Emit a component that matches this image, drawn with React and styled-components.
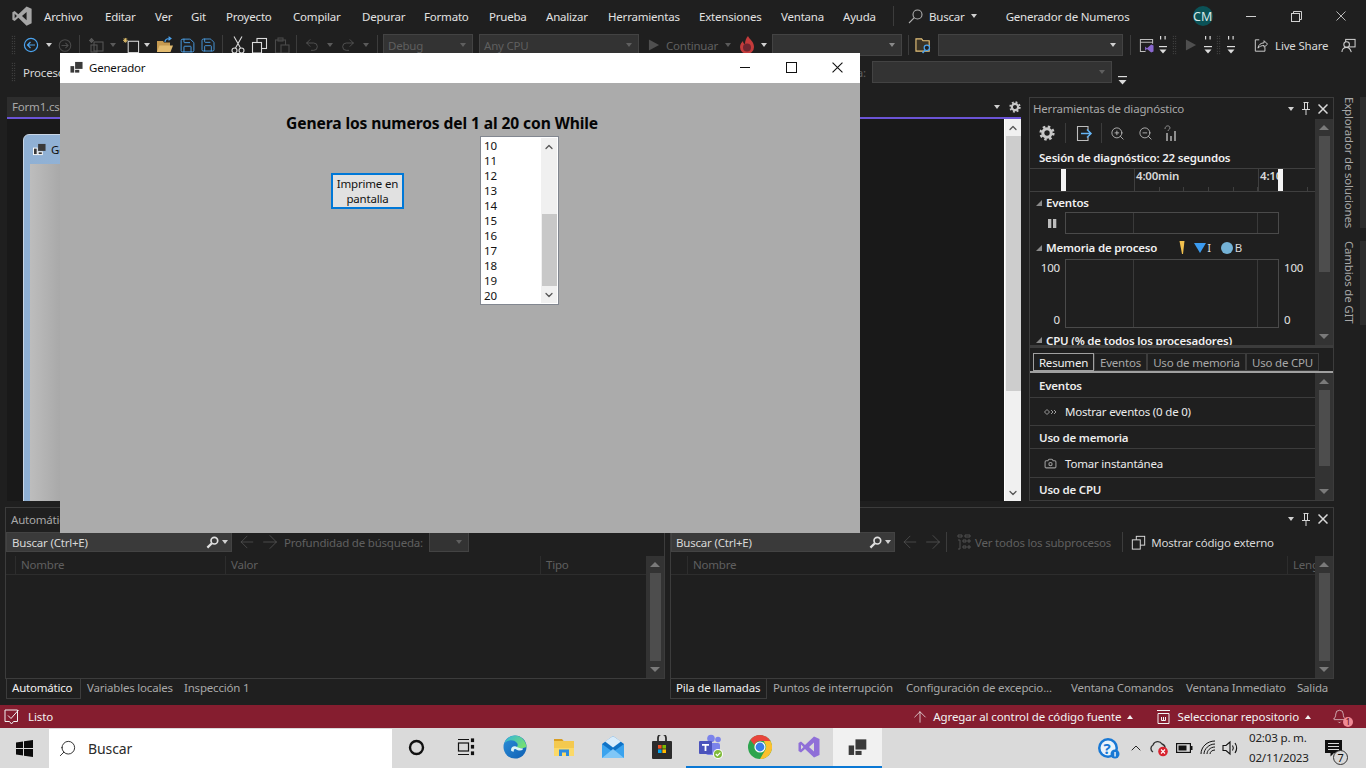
import React from "react";
import styled, { createGlobalStyle } from "styled-components";
import { Search, Save, Undo2, Redo2, ZoomIn, ZoomOut, ArrowLeft, ArrowRight, ArrowUp, Bell, Camera, ChevronUp, ChevronDown } from "lucide-react";

const GlobalStyle = createGlobalStyle`
  html, body { margin: 0; padding: 0; background: #1f1f1f; overflow: hidden; }
  * { box-sizing: border-box; }
  body { font-family: "Noto Sans", "Open Sans", sans-serif; font-size: 11.5px; letter-spacing: -0.2px; }
`;

const Page = styled.div`
  position: relative;
  width: 1366px;
  height: 768px;
  overflow: hidden;
  display: flex;
  flex-direction: column;
  color: #e0e0e0;
  background: #1f1f1f;
`;

/* ---------- title / menu ---------- */
const MenuBar = styled.div`
  height: 32px;
  display: flex;
  align-items: center;
  padding-left: 11px;
  flex: none;
`;
const Logo = styled.div`
  width: 33px;
  flex: none;
  display: flex;
`;
const MenuItem = styled.span`
  width: ${(p) => p.$w}px;
  flex: none;
  color: #e2e2e2;
  white-space: nowrap;
`;
const BarSep = styled.div`
  width: 1px;
  height: 20px;
  flex: none;
  background: #3c3c3c;
  margin-right: 14px;
`;
const SearchLabel = styled.span`
  color: #e2e2e2;
  margin-left: 6px;
  margin-right: 6px;
`;
const ProjectName = styled.span`
  margin-left: 29px;
  width: 187px;
  flex: none;
  color: #e2e2e2;
  white-space: nowrap;
`;
const Avatar = styled.div`
  width: 20px;
  height: 20px;
  flex: none;
  border-radius: 50%;
  background: #0b5257;
  color: #d8e8e8;
  display: flex;
  align-items: center;
  justify-content: center;
  font-size: 12.5px;
  letter-spacing: 0;
  margin-right: 16px;
`;
const WinBtn = styled.div`
  width: 45px;
  flex: none;
  display: flex;
  justify-content: center;
`;

/* ---------- toolbars ---------- */
const ToolBar = styled.div`
  height: ${(p) => p.$h}px;
  display: flex;
  align-items: center;
  padding-left: 11px;
  padding-right: ${(p) => p.$pr || 0}px;
  flex: none;
`;
const Slot = styled.div`
  width: ${(p) => p.$w}px;
  height: 22px;
  flex: none;
  display: flex;
  align-items: center;
  justify-content: center;
  color: ${(p) => p.$color || "#5a5a5a"};
`;
const OverflowSlot = styled.div`
  width: 8px;
  height: 22px;
  flex: none;
  padding-top: 12px;
`;
const Grip = styled.div`
  width: 5px;
  height: 20px;
  flex: none;
  background-image: radial-gradient(#5c5c5c 0.6px, transparent 0.8px);
  background-size: 2.5px 2.5px;
`;
const ToolSep = styled.div`
  width: 1px;
  height: 20px;
  background: #3c3c3c;
  flex: none;
  margin-left: ${(p) => p.$m ?? 7}px;
  margin-right: ${(p) => p.$mr ?? p.$m ?? 7}px;
`;
const Caret = styled.span`
  display: inline-block;
  width: 0;
  height: 0;
  flex: none;
  border-left: 3.5px solid transparent;
  border-right: 3.5px solid transparent;
  border-${(p) => (p.$up ? "bottom" : "top")}: 4px solid ${(p) => p.$color || "#d0d0d0"};
`;
const ScrollCaret = styled.span`
  width: 0;
  height: 0;
  border-left: 5px solid transparent;
  border-right: 5px solid transparent;
  border-${(p) => (p.$up ? "bottom" : "top")}: 5px solid #7a7a7a;
`;
const Combo = styled.div`
  width: ${(p) => p.$w}px;
  height: ${(p) => p.$h || 22}px;
  flex: none;
  background: #333333;
  border: 1px solid #434343;
  display: flex;
  align-items: center;
  justify-content: space-between;
  padding: 0 6px 0 4px;
  color: #5f5f5f;
  margin-right: ${(p) => p.$mr || 0}px;
`;
const DimText = styled.span`
  color: #5f5f5f;
  white-space: nowrap;
`;
const ToolText = styled.span`
  color: ${(p) => p.$color || "#d8d8d8"};
  white-space: nowrap;
  margin-left: ${(p) => p.$ml || 0}px;
`;
const Gap = styled.div`
  width: ${(p) => p.$w}px;
  flex: none;
`;
const Spring = styled.div`
  flex: 1;
`;

/* ---------- work area ---------- */
const WorkArea = styled.div`
  flex: 1;
  display: flex;
  padding-top: 11px;
  min-height: 0;
`;
const Docks = styled.div`
  width: 1335px;
  display: flex;
  flex-direction: column;
  gap: 6px;
`;
const TopRow = styled.div`
  height: 404px;
  display: flex;
  padding-left: 7px;
  gap: 8px;
`;
const BottomRow = styled.div`
  height: 198px;
  display: flex;
  padding-left: 5px;
  gap: 5px;
`;
const SideTabs = styled.div`
  width: 31px;
  display: flex;
  flex-direction: column;
  gap: 13px;
  align-items: flex-end;
`;
const SideTab = styled.div`
  writing-mode: vertical-rl;
  width: 26px;
  height: ${(p) => p.$h}px;
  border-right: 6px solid #2d2d2d;
  color: #a8a8a8;
  padding-right: 3px;
  white-space: nowrap;
`;

/* ---------- document well ---------- */
const DocWell = styled.div`
  width: 1014px;
  display: flex;
  flex-direction: column;
`;
const DocTabs = styled.div`
  height: 22px;
  flex: none;
  display: flex;
  align-items: flex-start;
  justify-content: space-between;
  border-bottom: 2px solid #6b54d6;
`;
const DocTab = styled.div`
  height: 20px;
  width: 120px;
  padding: 2px 0 0 5px;
  background: #2d2d2d;
  color: #a8a8a8;
`;
const DocTools = styled.div`
  display: flex;
  align-items: center;
  gap: 9px;
  height: 20px;
  color: #c8c8c8;
`;
const DocBody = styled.div`
  flex: 1;
  display: flex;
  min-height: 0;
`;
const Canvas = styled.div`
  flex: 1;
  background: #191919;
  padding: 15px 0 0 16px;
  overflow: hidden;
`;
const Preview = styled.div`
  width: 700px;
  height: 400px;
  border-radius: 6px 6px 0 0;
  border: 1px solid #c9d6e6;
  background: linear-gradient(90deg, #8fb0d4, #b6d0ec);
  padding: 0 0 0 6px;
`;
const PreviewTitle = styled.div`
  height: 29px;
  display: flex;
  align-items: center;
  gap: 5px;
  padding-left: 3px;
  color: #101010;
`;
const PreviewBody = styled.div`
  height: 400px;
  background: linear-gradient(90deg, #bdbdbd, #a9a9a9 30px);
`;

/* ---------- scroll bars ---------- */
const Scroll = styled.div`
  width: ${(p) => p.$w || 18}px;
  flex: none;
  display: flex;
  flex-direction: column;
  align-items: center;
  background: ${(p) => (p.$light ? "#f0f0f0" : "#333333")};
  border-left: ${(p) => (p.$light ? "1px solid #ffffff" : "none")};
`;
const ScrollEnd = styled.div`
  height: 17px;
  flex: none;
  display: flex;
  align-items: center;
  justify-content: center;
`;
const Thumb = styled.div`
  width: ${(p) => p.$w || 11}px;
  height: ${(p) => p.$h}px;
  margin-top: ${(p) => p.$top || 0}px;
  background: ${(p) => p.$color || "#4d4d4d"};
  flex: none;
`;

/* ---------- diagnostics ---------- */
const DiagPanel = styled.div`
  width: 305px;
  border: 1px solid #3c3c3c;
  display: flex;
  flex-direction: column;
  overflow: hidden;
`;
const PanelTitle = styled.div`
  height: ${(p) => p.$h || 21}px;
  flex: none;
  display: flex;
  align-items: center;
  justify-content: space-between;
  padding: 0 5px ${(p) => p.$pb || 0}px ${(p) => p.$pl || 3}px;
  color: #a8a8a8;
  white-space: nowrap;
`;
const TitleTools = styled.div`
  display: flex;
  align-items: center;
  gap: 8px;
`;
const DiagUpper = styled.div`
  height: 226px;
  flex: none;
  display: flex;
`;
const DiagContent = styled.div`
  flex: 1;
  min-width: 0;
  overflow: hidden;
`;
const DiagTools = styled.div`
  height: 28px;
  display: flex;
  align-items: center;
  padding-left: 9px;
  color: #c8c8c8;
`;
const Session = styled.div`
  height: 21px;
  padding-left: 9px;
  display: flex;
  align-items: center;
  font-weight: 600;
  color: #f0f0f0;
  white-space: nowrap;
`;
const Ruler = styled.div`
  position: relative;
  height: 24px;
  display: grid;
  grid-template-columns: 104px 124px 1fr;
  border-top: 1px solid #3f3f3f;
  border-bottom: 1px solid #3f3f3f;
  background-image: repeating-linear-gradient(90deg, #3f3f3f 0 1px, transparent 1px 24.7px);
  background-size: 100% 4px;
  background-position: 104px bottom;
  background-repeat: no-repeat;
`;
const RulerCell = styled.div`
  border-left: ${(p) => (p.$line ? "1px solid #3f3f3f" : "none")};
  padding: 0 0 0 1px;
  font-weight: 600;
  color: #d8d8d8;
  line-height: 13px;
  white-space: nowrap;
  overflow: hidden;
`;
const RulerHandle = styled.div`
  position: absolute;
  top: 0;
  bottom: 0;
  left: ${(p) => p.$left}px;
  width: 5px;
  background: #f4f4f4;
`;
const SectionHead = styled.div`
  height: ${(p) => p.$h}px;
  display: flex;
  align-items: center;
  padding: ${(p) => p.$pt || 0}px 0 0 6px;
  font-weight: 600;
  color: #f0f0f0;
  white-space: nowrap;
`;
const Tri = styled.span`
  width: 0;
  height: 0;
  flex: none;
  margin-right: 4px;
  border-bottom: 6px solid #8a8a8a;
  border-left: 6px solid transparent;
`;
const Legend = styled.div`
  display: flex;
  align-items: center;
  margin-left: 22px;
  font-weight: 400;
  color: #d8d8d8;
`;
const Marker = styled.span`
  width: 0;
  height: 0;
  border-left: 6.5px solid transparent;
  border-right: 6.5px solid transparent;
  border-top: 10px solid #3b9bf0;
`;
const Dot = styled.span`
  width: 12px;
  height: 12px;
  border-radius: 50%;
  background: #74b2d6;
`;
const GraphRow = styled.div`
  display: flex;
  height: ${(p) => p.$h}px;
`;
const AxisCol = styled.div`
  width: ${(p) => p.$w}px;
  flex: none;
  display: flex;
  flex-direction: column;
  justify-content: ${(p) => (p.$center ? "center" : "space-between")};
  align-items: ${(p) => (p.$center ? "center" : p.$left ? "flex-start" : "flex-end")};
  padding: ${(p) => (p.$center ? "0 0 0 9px" : p.$left ? "0 0 0 5px" : "0 5px 0 0")};
  color: #e4e4e4;
  line-height: 17px;
`;
const GraphBox = styled.div`
  width: 214px;
  flex: none;
  display: grid;
  grid-template-columns: 68px 124px 1fr;
  border: 1px solid #4a4a4a;
`;
const GraphCell = styled.div`
  border-right: ${(p) => (p.$last ? "none" : "1px solid #3a3a3a")};
`;
const Bar = styled.div`
  height: 3px;
  flex: none;
  background: #3c3c3c;
`;
const StatTabs = styled.div`
  height: 25px;
  flex: none;
  display: flex;
  padding: 5px 0 0 3px;
  border-bottom: 2px solid #a0a0a0;
`;
const StatTab = styled.div`
  width: ${(p) => p.$w}px;
  height: 18px;
  line-height: 17px;
  text-align: center;
  color: ${(p) => (p.$active ? "#f0f0f0" : "#a8a8a8")};
  border: 1px solid ${(p) => (p.$active ? "#a0a0a0" : "#3c3c3c")};
  white-space: nowrap;
`;
const DiagLower = styled.div`
  flex: 1;
  display: flex;
  min-height: 0;
`;
const SummaryList = styled.div`
  flex: 1;
  min-width: 0;
  overflow: hidden;
`;
const SummaryRow = styled.div`
  height: ${(p) => p.$h}px;
  display: flex;
  align-items: center;
  padding: ${(p) => p.$pt ?? 1}px 0 0 ${(p) => (p.$item ? 14 : 9)}px;
  border-bottom: ${(p) => (p.$last ? "none" : "1px solid #3c3c3c")};
  font-weight: ${(p) => (p.$item ? 400 : 600)};
  color: #ececec;
  white-space: nowrap;
`;
const RowIcon = styled.span`
  width: 21px;
  display: flex;
  flex: none;
  color: #9a9a9a;
`;

/* ---------- bottom tool windows ---------- */
const ToolPane = styled.div`
  width: ${(p) => p.$w}px;
  display: flex;
  flex-direction: column;
`;
const PaneBox = styled.div`
  height: 172px;
  border: 1px solid #3c3c3c;
  display: flex;
  flex-direction: column;
`;
const PaneTools = styled.div`
  height: 20px;
  display: flex;
  align-items: center;
  flex: none;
`;
const SearchBox = styled.div`
  width: ${(p) => p.$w}px;
  height: 20px;
  flex: none;
  background: #3a3a3a;
  border: 1px solid #434343;
  display: flex;
  align-items: center;
  justify-content: space-between;
  padding: 0 3px 0 ${(p) => p.$pl || 5}px;
  color: #d8d8d8;
  margin-right: 5px;
`;
const SearchIcons = styled.div`
  display: flex;
  align-items: center;
  gap: 3px;
`;
const Pane = styled.div`
  flex: 1;
  display: flex;
  min-height: 0;
  padding-top: 4px;
`;
const GridArea = styled.div`
  flex: 1;
  min-width: 0;
`;
const GridHead = styled.div`
  height: 19px;
  display: grid;
  grid-template-columns: ${(p) => p.$cols};
  border-bottom: 1px solid #2d2d2d;
`;
const GridCol = styled.div`
  border-left: ${(p) => (p.$first ? "none" : "1px solid #2d2d2d")};
  padding-left: 5px;
  color: #5f5f5f;
  line-height: 18px;
  white-space: nowrap;
  overflow: hidden;
`;
const PaneTabs = styled.div`
  display: flex;
  height: 20px;
`;
const PaneTab = styled.div`
  height: 20px;
  line-height: 18px;
  padding-left: ${(p) => (p.$active ? 5 : 0)}px;
  margin-left: ${(p) => p.$ml || 0}px;
  border: ${(p) => (p.$active ? "1px solid #3c3c3c" : "none")};
  border-top: none;
  color: ${(p) => (p.$active ? "#f0f0f0" : "#a8a8a8")};
  white-space: nowrap;
  width: ${(p) => (p.$w ? `${p.$w}px` : "auto")};
`;

/* ---------- status bar and taskbar ---------- */
const StatusBar = styled.div`
  height: 23px;
  flex: none;
  background: #851d2f;
  display: flex;
  align-items: center;
  padding-left: 4px;
  color: #f2f2f2;
  letter-spacing: -0.1px;
`;
const StatusItem = styled.div`
  display: flex;
  align-items: center;
  margin-right: ${(p) => p.$mr || 0}px;
  white-space: nowrap;
`;
const BellWrap = styled.div`
  position: relative;
  width: 18px;
  margin-right: 16px;
  display: flex;
`;
const BellBadge = styled.span`
  position: absolute;
  right: -3px;
  bottom: -3px;
  width: 10px;
  height: 10px;
  border-radius: 50%;
  background: #f08a96;
  color: #5a0d18;
  font-size: 9px;
  line-height: 10px;
  text-align: center;
  letter-spacing: 0;
`;
const TaskBar = styled.div`
  height: 40px;
  flex: none;
  background: #dadada;
  display: flex;
  align-items: center;
`;
const StartBtn = styled.div`
  width: 49px;
  display: flex;
  justify-content: center;
`;
const TaskSearch = styled.div`
  width: 343px;
  height: 39px;
  margin-top: 1px;
  background: #ffffff;
  display: flex;
  align-items: center;
  padding-left: 9px;
  gap: 11px;
  color: #2b2b2b;
  font-size: 14px;
  letter-spacing: -0.1px;
`;
const MirrorIcon = styled.span`
  display: flex;
  transform: scaleX(-1);
`;
const TaskBtn = styled.div`
  width: ${(p) => p.$w || 49}px;
  height: 40px;
  flex: none;
  display: flex;
  align-items: center;
  justify-content: center;
  background: ${(p) => (p.$active ? "#f1f1f1" : "transparent")};
  border-bottom: ${(p) => (p.$open ? "2px solid #0a78d4" : "2px solid transparent")};
`;
const Tray = styled.div`
  margin-left: auto;
  padding-right: 12px;
  display: flex;
  align-items: center;
  color: #1a1a1a;
`;
const TraySlot = styled.div`
  width: ${(p) => p.$w}px;
  display: flex;
  justify-content: center;
`;
const Clock = styled.div`
  width: 72px;
  display: flex;
  flex-direction: column;
  gap: 4px;
  padding-left: 9px;
  color: #222222;
  font-size: 11.6px;
  line-height: 16px;
  white-space: nowrap;
`;
const NotifyBtn = styled.div`
  position: relative;
  width: 42px;
  display: flex;
  justify-content: center;
`;
const NotifyBadge = styled.span`
  position: absolute;
  left: 21px;
  top: 10px;
  width: 15px;
  height: 15px;
  border-radius: 50%;
  border: 1px solid #333;
  background: #d8d8d8;
  color: #111;
  font-size: 11px;
  line-height: 13px;
  text-align: center;
`;

/* ---------- floating form ---------- */
const FormWindow = styled.div`
  position: absolute;
  left: 60px;
  top: 53px;
  width: 800px;
  height: 480px;
  display: flex;
  flex-direction: column;
  background: #ababab;
  color: #000000;
`;
const FormTitle = styled.div`
  height: 30px;
  flex: none;
  background: #ffffff;
  display: flex;
  align-items: center;
  padding: 0 0 2px 10px;
`;
const FormTitleText = styled.span`
  flex: 1;
  margin-left: 6px;
  color: #111111;
`;
const FormCtl = styled.div`
  width: 46px;
  flex: none;
  display: flex;
  justify-content: center;
`;
const Heading = styled.div`
  margin: 30px 0 3px 226px;
  height: 20px;
  line-height: 20px;
  font-size: 15.6px;
  font-weight: 700;
  letter-spacing: -0.1px;
  color: #050505;
  white-space: nowrap;
`;
const FormRow = styled.div`
  display: flex;
  align-items: flex-start;
  padding-left: 271px;
`;
const PrintButton = styled.div`
  width: 73px;
  height: 36px;
  margin: 37px 76px 0 0;
  background: #e1e1e1;
  border: 2px solid #0078d7;
  display: flex;
  align-items: center;
  justify-content: center;
  text-align: center;
  line-height: 15px;
  color: #111;
`;
const NumberList = styled.div`
  width: 79px;
  height: 169px;
  background: #ffffff;
  border: 1px solid #828790;
  display: flex;
  padding: 1px;
`;
const NumberItems = styled.div`
  flex: 1;
  padding: 0 0 0 2px;
  line-height: 15px;
  overflow: hidden;
  color: #111;
`;

/* ---------- drawn icons ---------- */
const VsMark = ({ size = 22, fill = "#a6a6a6" }) => (
  <svg width={size} height={size} viewBox="0 0 24 24">
    <path
      fillRule="evenodd"
      fill={fill}
      d="M17 1.5 22.5 4v16L17 22.5 8 14l-4 3.5L1.5 16V8L4 6.5 8 10ZM17 7.5 12 12l5 4.5ZM4 9.5v5L6.5 12Z"
    />
  </svg>
);
const AppGlyph = ({ size = 14, color = "#3a3a3a", stroke }) => (
  <svg width={size} height={size} viewBox="0 0 14 14">
    <rect x="5.5" y="1" width="8" height="7.5" fill={color} />
    <rect x="0.5" y="5.5" width="4" height="7" fill={color} stroke={stroke} />
    <rect x="5.5" y="9.5" width="4.5" height="3" fill={color} stroke={stroke} />
  </svg>
);
const SolidGear = ({ size = 12, color = "#c8c8c8" }) => (
  <svg width={size} height={size} viewBox="0 0 16 16" fill="none" stroke={color}>
    <circle cx="8" cy="8" r="4.2" strokeWidth="3" />
    <circle cx="8" cy="8" r="6.4" strokeWidth="2.4" strokeDasharray="2.5 2.53" />
  </svg>
);
const PinGlyph = ({ color = "#d8d8d8" }) => (
  <svg width="8" height="13" viewBox="0 0 8 13" fill="none" stroke={color}>
    <path d="M1.5 0.5h5M2.500 0.5v6.500M5.500 0.500v6.500M0 7.500h8M4 8v5" />
  </svg>
);
const CrossGlyph = ({ size = 10, color = "#d8d8d8", width = 1.5 }) => (
  <svg width={size} height={size} viewBox="0 0 10 10" fill="none" stroke={color} strokeWidth={width}>
    <path d="M0.500 0.500 9.500 9.500M9.500 0.500 0.500 9.500" />
  </svg>
);
const BackIcon = () => (
  <svg width="16" height="16" viewBox="0 0 16 16" fill="none" stroke="#4ba3ee" strokeWidth="1.2">
    <circle cx="8" cy="8" r="6.6" />
    <path d="M12 8H4.500M7.500 5l-3 3 3 3" />
  </svg>
);
const ForwardIcon = () => (
  <svg width="15" height="15" viewBox="0 0 16 16" fill="none" stroke="#4a4a4a" strokeWidth="1.2">
    <circle cx="8" cy="8" r="6.6" />
    <path d="M4 8h7.500M8.500 5l3 3-3 3" />
  </svg>
);
const NewProjectIcon = () => (
  <svg width="17" height="17" viewBox="0 0 17 17" fill="none" stroke="#555" strokeWidth="1.1">
    <path d="M2 2 5 5M5 2 2 5M3.500 1v5M1 3.500h5" />
    <rect x="6" y="5" width="9" height="9" />
    <rect x="3" y="8" width="6" height="7" />
  </svg>
);
const NewFileIcon = () => (
  <svg width="17" height="17" viewBox="0 0 18 18" fill="none">
    <path d="M2.500 1v5M0 3.500h5M1 1.500l3 4M4 1.500l-3 4" stroke="#e8c56f" strokeWidth="1" />
    <rect x="5.500" y="4.500" width="11" height="12" stroke="#dcdcdc" strokeWidth="1.1" />
  </svg>
);
const OpenIcon = () => (
  <svg width="18" height="18" viewBox="0 0 18 18">
    <path d="M1 5h6l1 1.500h6V16H1Z" fill="#c69a50" />
    <path d="M1 16l2.500-6.500H17L14.500 16Z" fill="#e2bb70" />
    <path d="M9 6c0-2.500 2-3.500 5-3.500M12.500 0.800l2.400 1.700-2.400 1.800" stroke="#4ba3ee" strokeWidth="1.2" fill="none" />
  </svg>
);
const CutIcon = () => (
  <svg width="14" height="18" viewBox="0 0 14 18" fill="none" stroke="#d8d8d8" strokeWidth="1.1">
    <circle cx="3.500" cy="14.500" r="2.500" />
    <circle cx="10.500" cy="14.500" r="2.500" />
    <path d="M4.500 12 11 0.500M9.500 12 3 0.500" />
  </svg>
);
const CopyIcon = ({ color = "#dcdcdc", size = 17 }) => (
  <svg width={size} height={size} viewBox="0 0 17 17" fill="none" stroke={color} strokeWidth="1.1">
    <rect x="6" y="1.500" width="9.500" height="10" />
    <rect x="1.500" y="5.500" width="9" height="10.500" fill="#1f1f1f" />
  </svg>
);
const PasteIcon = () => (
  <svg width="16" height="17" viewBox="0 0 16 17" fill="none" stroke="#4a4a4a" strokeWidth="1.1">
    <rect x="1.500" y="3" width="10" height="13" />
    <rect x="4" y="1" width="5" height="3" />
    <rect x="7" y="8" width="8" height="8" fill="#1f1f1f" />
  </svg>
);
const PlayIcon = ({ color = "#4f4f4f" }) => (
  <svg width="12" height="14" viewBox="0 0 13 14">
    <path d="M1 1l11 6-11 6Z" fill={color} />
  </svg>
);
const FireIcon = () => (
  <svg width="16" height="18" viewBox="0 0 16 18">
    <path d="M9 0c1 3 6 5 6 11a7 7 0 0 1-14 0c0-3 2-5 3-6 0 2 1 3 2 3 0-3 1-6 3-8Z" fill="#c43b3b" />
    <circle cx="8" cy="11.500" r="4" fill="#6f2630" />
  </svg>
);
const FolderFind = () => (
  <svg width="19" height="19" viewBox="0 0 19 19">
    <path d="M1 2.500h6l1.500 2H15v11H1Z" fill="#3a3325" stroke="#e5c27a" strokeWidth="1.2" />
    <circle cx="12.500" cy="12" r="2.800" fill="#1f1f1f" stroke="#4ba3ee" strokeWidth="1.3" />
    <path d="M10.500 14.500 8 17.500" stroke="#4ba3ee" strokeWidth="1.5" />
  </svg>
);
const VsWindowIcon = () => (
  <svg width="15" height="15" viewBox="0 0 16 16" fill="none">
    <path d="M14.500 6V1.500h-13v13H7M1.500 4.500h13" stroke="#bcbcbc" strokeWidth="1.1" />
    <path d="M6.500 9l2 1.800L13 7l2.500 1v6.500L13 15.500l-4.500-3.800-2 1.800Z" fill="#8a68d0" />
  </svg>
);
const StepIcon = () => (
  <svg width="8" height="18" viewBox="0 0 8 18" fill="#dcdcdc">
    <rect x="1" y="0" width="1.200" height="3.500" />
    <rect x="5.500" y="0" width="1.200" height="3.500" />
    <rect x="0" y="10" width="8" height="1.200" />
    <path d="M0.500 13.500h7L4 17.500Z" />
  </svg>
);
const OverflowIcon = () => (
  <svg width="9" height="9" viewBox="0 0 9 9" fill="#dcdcdc">
    <rect x="0" y="0" width="9" height="1.200" />
    <path d="M0.500 4h8L4.500 8.500Z" />
  </svg>
);
const ShareIcon = () => (
  <svg width="14" height="15" viewBox="0 0 16 16" fill="none" stroke="#d0d0d0" strokeWidth="1.1">
    <path d="M6 1.500H1.500v13h11V10" />
    <path d="M4.500 11c.5-4 3.500-6 7-6V2.500L15.500 6.500 11.500 10V8c-3 0-5 1-7 3Z" />
  </svg>
);
const FeedbackIcon = () => (
  <svg width="15" height="15" viewBox="0 0 16 16" fill="none" stroke="#d0d0d0" strokeWidth="1.1">
    <rect x="5" y="1.500" width="10" height="8" />
    <circle cx="6" cy="7" r="3" fill="#1f1f1f" />
    <path d="M1 15c0-3 2-5 5-5s4 2 5 5" />
  </svg>
);
const ExportIcon = () => (
  <svg width="17" height="17" viewBox="0 0 17 17" fill="none">
    <path d="M12 5V1.500H1.500v14H12V12" stroke="#bdbdbd" strokeWidth="1.1" />
    <path d="M5 8.500h10M11 4.500l4 4-4 4" stroke="#66b5f5" strokeWidth="1.5" />
  </svg>
);
const ChartHelp = () => (
  <svg width="15" height="16" viewBox="0 0 15 16" fill="#8d8d8d">
    <rect x="2" y="8" width="2" height="8" />
    <rect x="6" y="11" width="2" height="5" />
    <rect x="10" y="6" width="2" height="10" />
    <path d="M1 4c0-4 5-4 5-1 0 1.500-2 1.500-2 3" fill="none" stroke="#8d8d8d" />
  </svg>
);
const HeapArrow = () => (
  <svg width="6" height="13" viewBox="0 0 6 13">
    <path d="M0.500 0H5.500L4 13H3Z" fill="#f2c14e" />
  </svg>
);
const PauseIcon = () => (
  <svg width="9" height="9" viewBox="0 0 9 9" fill="#bcbcbc">
    <rect x="0" y="0" width="3.300" height="9" />
    <rect x="5" y="0" width="3.300" height="9" />
  </svg>
);
const EventsIcon = () => (
  <svg width="12" height="6" viewBox="0 0 12 6" fill="none" stroke="#9a9a9a">
    <path d="M3 0.500.5 3 3 5.500 5.500 3ZM7 1l2 2-2 2M10 1l2 2-2 2" />
  </svg>
);
const ThreadsIcon = () => (
  <svg width="14" height="16" viewBox="0 0 14 16" fill="none" stroke="#505050">
    <path d="M1 1h4v2H1ZM8 1h5v2H8ZM1 6h2v9H1M6 6h3v2H6ZM11 6h2v2h-2ZM6 12h3v2H6ZM11 12h2v2h-2Z" />
  </svg>
);
const LensIcon = ({ color = "#e0e0e0", size = 13 }) => (
  <svg width={size} height={size} viewBox="0 0 14 14" fill="none" stroke={color} strokeWidth="1.8">
    <circle cx="9" cy="5" r="3.600" />
    <path d="M6.300 7.800 1.500 12.500" strokeWidth="2.400" />
  </svg>
);
const TopLens = () => (
  <svg width="15" height="15" viewBox="0 0 15 15" fill="none" stroke="#b0b0b0" strokeWidth="1.1">
    <circle cx="9.500" cy="5.500" r="4.500" />
    <path d="M6.300 8.700 1 14" />
  </svg>
);
const StatusCheck = () => (
  <svg width="16" height="18" viewBox="0 0 16 18" fill="none" stroke="#f2f2f2" strokeWidth="1">
    <path d="M1 2h12.500v11.500H9.500L7.500 16 5.500 13.500H1Z" />
    <path d="M4 7.500 7 10.500 14.500 2" />
  </svg>
);
const RepoIcon = () => (
  <svg width="15" height="15" viewBox="0 0 15 15" fill="none" stroke="#f2f2f2" strokeWidth="1">
    <path d="M1 1.500h13M2 4.500h11v10H2ZM5.500 8v3.500h4V8M7.500 8v3.500" />
  </svg>
);
const WindowsLogo = () => (
  <svg width="17" height="17" viewBox="0 0 17 17" fill="#0b0b0b">
    <path d="M0 2.400 7 1.400v6.500H0ZM8 1.200 17 0v7.900H8ZM0 9h7v6.500l-7-1ZM8 9h9v8l-9-1.300Z" />
  </svg>
);
const Cortana = () => (
  <svg width="17" height="17" viewBox="0 0 17 17" fill="none" stroke="#111" strokeWidth="2.400">
    <circle cx="8.500" cy="8.500" r="6.500" />
  </svg>
);
const TaskView = () => (
  <svg width="18" height="18" viewBox="0 0 18 18" fill="none" stroke="#111" strokeWidth="1.200">
    <path d="M1 1.500h11M1 16.500h11" />
    <rect x="1.500" y="5" width="10" height="8" />
    <rect x="14.500" y="1" width="2" height="2.500" fill="#111" />
    <rect x="14.500" y="7.500" width="2" height="2.500" fill="#111" />
    <rect x="14.500" y="14" width="2" height="2.500" fill="#111" />
  </svg>
);
const EdgeIcon = () => (
  <svg width="24" height="24" viewBox="0 0 24 24">
    <defs>
      <linearGradient id="edgeA" x1="0" y1="0" x2="1" y2="1">
        <stop offset="0" stopColor="#2c8fd8" />
        <stop offset="1" stopColor="#0f5fb3" />
      </linearGradient>
      <linearGradient id="edgeB" x1="0" y1="0" x2="1" y2="0.600">
        <stop offset="0" stopColor="#2fb4e0" />
        <stop offset="1" stopColor="#74df74" />
      </linearGradient>
    </defs>
    <circle cx="12" cy="12" r="11.500" fill="url(#edgeA)" />
    <path d="M23.500 13C23.500 6 18 .5 12 .5 7 .5 3 4 1.500 8c3-3 9-4 12.500 0 1.500 2 .500 4-1.500 4.500 2 .500 6 1.500 11-.5Z" fill="url(#edgeB)" />
    <path d="M8 15c0-3 2.500-4.500 5-3.500 2 .8 3.500 2 7 2 0 1-1 2-3 2-3.500 0-3.500-1.500-5-1.500-1 0-1.500 1-1 2.500-1.800 0-3-.3-3-1.500Z" fill="#dff4f7" />
  </svg>
);
const ExplorerIcon = () => (
  <svg width="22" height="22" viewBox="0 0 22 22">
    <path d="M1 3h8l2 2.500H1Z" fill="#d99e22" />
    <rect x="1" y="5" width="20" height="15" fill="#f4c94f" />
    <path d="M1 12h20v8H1Z" fill="#fbd968" />
    <path d="M6 20v-6.500h10V20h-3v-3.500H9V20Z" fill="#2b8be0" />
  </svg>
);
const MailIcon = () => (
  <svg width="24" height="24" viewBox="0 0 24 24">
    <path d="M1 9 12 1l11 8v14H1Z" fill="#0f72c6" />
    <path d="M1 9l11 8 11-8v14H1Z" fill="#3aa3ee" />
    <path d="M4 6.500 12 1l8 5.500-8 6Z" fill="#d8ecfb" />
    <path d="M1 23l11-9 11 9Z" fill="#80c7f7" />
  </svg>
);
const StoreIcon = () => (
  <svg width="22" height="25" viewBox="0 0 22 25">
    <path d="M7 6V3a4 4 0 0 1 8 0v3" fill="none" stroke="#2f2f2f" strokeWidth="1.800" />
    <rect x="1" y="6" width="20" height="18" rx="1" fill="#2b2b2b" />
    <rect x="7" y="10" width="3.600" height="3.600" fill="#f25022" />
    <rect x="11.400" y="10" width="3.600" height="3.600" fill="#7fba00" />
    <rect x="7" y="14.400" width="3.600" height="3.600" fill="#00a4ef" />
    <rect x="11.400" y="14.400" width="3.600" height="3.600" fill="#ffb900" />
  </svg>
);
const TeamsIcon = () => (
  <svg width="26" height="26" viewBox="0 0 26 26">
    <circle cx="20" cy="5.500" r="2.800" fill="#7b83eb" />
    <circle cx="13" cy="4.500" r="3.800" fill="#7b83eb" />
    <rect x="8" y="9" width="14" height="12" rx="2" fill="#7b83eb" />
    <rect x="1" y="7" width="13" height="13" rx="1" fill="#4b53bc" />
    <path d="M4 10h7v1.800H8.400V17H6.600v-5.200H4Z" fill="#fff" />
    <circle cx="20" cy="20" r="5" fill="#fff" />
    <circle cx="20" cy="20" r="4" fill="#7fba3a" />
    <path d="M17.800 20l1.600 1.600 3-3" stroke="#fff" strokeWidth="1.200" fill="none" />
  </svg>
);
const ChromeIcon = () => (
  <svg width="24" height="24" viewBox="0 0 24 24">
    <circle cx="12" cy="12" r="12" fill="#2da44e" />
    <path d="M12 0a12 12 0 0 1 10.400 6H12a6 6 0 0 0-5.600 3.900L2.300 5A12 12 0 0 1 12 0Z" fill="#e8453c" />
    <path d="M22.400 6A12 12 0 0 1 12 24l5.200-9A6 6 0 0 0 16.600 8l-.6-2Z" fill="#fbc02d" />
    <circle cx="12" cy="12" r="5.600" fill="#fff" />
    <circle cx="12" cy="12" r="4.400" fill="#3b7de8" />
  </svg>
);
const HelpIcon = () => (
  <svg width="22" height="22" viewBox="0 0 22 22">
    <circle cx="10" cy="11" r="10" fill="#1878d4" />
    <circle cx="10" cy="11" r="7.500" fill="#e9f3fb" />
    <text x="5.500" y="17" fontSize="15" fontWeight="700" fontFamily="Noto Sans, sans-serif" fill="#1878d4">?</text>
    <circle cx="17" cy="17" r="4.500" fill="#1878d4" />
    <rect x="16.400" y="15" width="1.300" height="4.500" fill="#fff" />
  </svg>
);
const CloudFail = () => (
  <svg width="20" height="18" viewBox="0 0 20 18">
    <path d="M3 13a4 4 0 0 1 0-7 5 5 0 0 1 9-1 4 4 0 0 1 3 4" fill="none" stroke="#333" strokeWidth="1.400" />
    <circle cx="13" cy="12.500" r="4.800" fill="#d8232f" />
    <path d="M11 10.500l4 4M15 10.500l-4 4" stroke="#fff" strokeWidth="1.100" />
  </svg>
);
const BatteryIcon = () => (
  <svg width="17" height="10" viewBox="0 0 17 10" fill="none" stroke="#111" strokeWidth="1.200">
    <rect x="0.600" y="0.600" width="13.800" height="8.800" />
    <rect x="2.500" y="2.500" width="8" height="5" fill="#111" stroke="none" />
    <rect x="15" y="3" width="1.500" height="4" fill="#111" stroke="none" />
  </svg>
);
const WifiIcon = () => (
  <svg width="16" height="16" viewBox="0 0 16 16" fill="none" stroke="#111" strokeWidth="1">
    <path d="M1 14C1 7 7 1 15 1M4 14c0-5 5-10 11-10M7 14c0-3 3-7 8-7M10 14c0-2 2-4 5-4" />
  </svg>
);
const SoundIcon = () => (
  <svg width="17" height="16" viewBox="0 0 17 16" fill="none" stroke="#111" strokeWidth="1.100">
    <path d="M1 5.500h3L8 2v12L4 10.500H1ZM10.500 5.500c1 1.500 1 3.500 0 5M13 3c2 3 2 7 0 10" />
  </svg>
);
const NotifyIcon = () => (
  <svg width="17" height="17" viewBox="0 0 17 17" fill="#111">
    <path d="M0 0h17v13h-8l-3.500 3.500V13H0Z" />
    <path d="M3 3.500h11M3 6.500h11M3 9.500h11" stroke="#dadada" strokeWidth="1" />
  </svg>
);
const MinGlyph = ({ color = "#111" }) => (
  <svg width="10" height="10" viewBox="0 0 10 10" stroke={color}>
    <path d="M0 5.500h10" />
  </svg>
);
const MaxGlyph = () => (
  <svg width="11" height="11" viewBox="0 0 11 11" fill="none" stroke="#111">
    <rect x="0.500" y="0.500" width="10" height="10" />
  </svg>
);
const RestoreGlyph = () => (
  <svg width="11" height="11" viewBox="0 0 11 11" fill="none" stroke="#d0d0d0">
    <rect x="0.500" y="2.500" width="8" height="8" />
    <path d="M2.500 2.500v-2h8v8h-2" />
  </svg>
);

const NUMBERS = [10, 11, 12, 13, 14, 15, 16, 17, 18, 19, 20];
const MENU = [
  ["Archivo", 61], ["Editar", 50], ["Ver", 36], ["Git", 35], ["Proyecto", 67], ["Compilar", 69], ["Depurar", 62],
  ["Formato", 65], ["Prueba", 57], ["Analizar", 62], ["Herramientas", 91], ["Extensiones", 82], ["Ventana", 62], ["Ayuda", 50],
];

function PanelControls() {
  return (
    <TitleTools>
      <Caret />
      <PinGlyph />
      <CrossGlyph />
    </TitleTools>
  );
}

function DarkScroll({ size }) {
  return (
    <Scroll>
      <ScrollEnd><ScrollCaret $up /></ScrollEnd>
      <Thumb $h={size} />
      <Spring />
      <ScrollEnd><ScrollCaret /></ScrollEnd>
    </Scroll>
  );
}

function LightScroll({ width, top, size, color }) {
  return (
    <Scroll $light $w={width}>
      <ScrollEnd><ChevronUp size={12} strokeWidth={2.5} color="#555" /></ScrollEnd>
      <Thumb $w={15} $top={top} $h={size} $color={color} />
      <Spring />
      <ScrollEnd><ChevronDown size={12} strokeWidth={2.5} color="#555" /></ScrollEnd>
    </Scroll>
  );
}

export default function App() {
  return (
    <Page>
      <GlobalStyle />

      <MenuBar>
        <Logo><VsMark /></Logo>
        {MENU.map(([label, w]) => (
          <MenuItem key={label} $w={w}>{label}</MenuItem>
        ))}
        <BarSep />
        <TopLens />
        <SearchLabel>Buscar</SearchLabel>
        <Caret />
        <ProjectName>Generador de Numeros</ProjectName>
        <Avatar>CM</Avatar>
        <WinBtn><MinGlyph color="#d0d0d0" /></WinBtn>
        <WinBtn><RestoreGlyph /></WinBtn>
        <WinBtn><CrossGlyph color="#b8b8b8" width={1} /></WinBtn>
      </MenuBar>

      <ToolBar $h={26}>
        <Grip />
        <Gap $w={6} />
        <Slot $w={18}><BackIcon /></Slot>
        <Slot $w={18}><Caret /></Slot>
        <Slot $w={14}><ForwardIcon /></Slot>
        <ToolSep $m={7} />
        <Slot $w={18}><NewProjectIcon /></Slot>
        <Slot $w={16}><Caret $color="#5a5a5a" /></Slot>
        <Slot $w={20}><NewFileIcon /></Slot>
        <Slot $w={12}><Caret /></Slot>
        <Slot $w={23}><OpenIcon /></Slot>
        <Slot $w={22} $color="#4ba3ee"><Save size={17} strokeWidth={1.3} /></Slot>
        <Slot $w={20} $color="#4ba3ee"><Save size={16} strokeWidth={1.3} /></Slot>
        <ToolSep $m={4} />
        <Slot $w={21}><CutIcon /></Slot>
        <Slot $w={23}><CopyIcon /></Slot>
        <Slot $w={21}><PasteIcon /></Slot>
        <ToolSep $m={4} />
        <Slot $w={22}><Undo2 size={16} strokeWidth={1.2} /></Slot>
        <Slot $w={14}><Caret $color="#5a5a5a" /></Slot>
        <Slot $w={22}><Redo2 size={16} strokeWidth={1.2} /></Slot>
        <Slot $w={14}><Caret $color="#5a5a5a" /></Slot>
        <ToolSep $m={4} />
        <Gap $w={1} />
        <Combo $w={90} $mr={6}><DimText>Debug</DimText><Caret $color="#5f5f5f" /></Combo>
        <Combo $w={160} $mr={9}><DimText>Any CPU</DimText><Caret $color="#5f5f5f" /></Combo>
        <PlayIcon />
        <ToolText $color="#5f5f5f" $ml={6}>Continuar</ToolText>
        <Slot $w={20}><Caret $color="#5a5a5a" /></Slot>
        <Slot $w={18}><FireIcon /></Slot>
        <Slot $w={16}><Caret /></Slot>
        <Combo $w={130}><span /><Caret $color="#8a8a8a" /></Combo>
        <ToolSep $m={6} />
        <Slot $w={18}><FolderFind /></Slot>
        <Gap $w={5} />
        <Combo $w={185}><span /><Caret /></Combo>
        <ToolSep $m={7} />
        <Slot $w={16}><VsWindowIcon /></Slot>
        <Slot $w={18}><StepIcon /></Slot>
        <Grip />
        <Gap $w={8} />
        <Slot $w={12}><PlayIcon /></Slot>
        <Gap $w={4} />
        <Slot $w={14}><StepIcon /></Slot>
        <Gap $w={1} />
        <Grip />
        <Gap $w={3} />
        <Slot $w={14}><StepIcon /></Slot>
        <Gap $w={16} />
        <ShareIcon />
        <ToolText $ml={7}>Live Share</ToolText>
        <Gap $w={13} />
        <FeedbackIcon />
      </ToolBar>

      <ToolBar $h={28} $pr={240}>
        <Grip />
        <ToolText $ml={7}>Procesos</ToolText>
        <Spring />
        <DimText>Marco de pila:</DimText>
        <Gap $w={6} />
        <Combo $w={240}><span /><Caret $color="#5f5f5f" /></Combo>
        <Gap $w={6} />
        <OverflowSlot><OverflowIcon /></OverflowSlot>
      </ToolBar>

      <WorkArea>
        <Docks>
          <TopRow>
            <DocWell>
              <DocTabs>
                <DocTab>Form1.cs</DocTab>
                <DocTools>
                  <Caret />
                  <SolidGear />
                </DocTools>
              </DocTabs>
              <DocBody>
                <Canvas>
                  <Preview>
                    <PreviewTitle><AppGlyph size={13} stroke="#ffffff" />Generador</PreviewTitle>
                    <PreviewBody />
                  </Preview>
                </Canvas>
                <LightScroll width={17} top={0} size={255} color="#cdcdcd" />
              </DocBody>
            </DocWell>

            <DiagPanel>
              <PanelTitle>
                Herramientas de diagnóstico
                <PanelControls />
              </PanelTitle>
              <DiagUpper>
                <DiagContent>
                  <DiagTools>
                    <SolidGear size={16} />
                    <ToolSep $m={10} />
                    <ExportIcon />
                    <ToolSep $m={8} />
                    <ZoomIn size={15} strokeWidth={1.3} />
                    <Gap $w={13} />
                    <ZoomOut size={15} strokeWidth={1.3} />
                    <Gap $w={11} />
                    <ChartHelp />
                  </DiagTools>
                  <Session>Sesión de diagnóstico: 22 segundos</Session>
                  <Ruler>
                    <RulerCell />
                    <RulerCell $line>4:00min</RulerCell>
                    <RulerCell $line>4:10</RulerCell>
                    <RulerHandle $left={31} />
                    <RulerHandle $left={248} />
                  </Ruler>
                  <SectionHead $h={20} $pt={1}><Tri />Eventos</SectionHead>
                  <GraphRow $h={22}>
                    <AxisCol $w={35} $center><PauseIcon /></AxisCol>
                    <GraphBox>
                      <GraphCell /><GraphCell /><GraphCell $last />
                    </GraphBox>
                  </GraphRow>
                  <SectionHead $h={25} $pt={2}>
                    <Tri />Memoria de proceso
                    <Legend>
                      <HeapArrow />
                      <Gap $w={9} />
                      <Marker />
                      <Gap $w={1} />I
                      <Gap $w={10} />
                      <Dot />
                      <Gap $w={2} />B
                    </Legend>
                  </SectionHead>
                  <GraphRow $h={69}>
                    <AxisCol $w={35}><span>100</span><span>0</span></AxisCol>
                    <GraphBox>
                      <GraphCell /><GraphCell /><GraphCell $last />
                    </GraphBox>
                    <AxisCol $w={30} $left><span>100</span><span>0</span></AxisCol>
                  </GraphRow>
                  <SectionHead $h={24}><Tri />CPU (% de todos los procesadores)</SectionHead>
                </DiagContent>
                <DarkScroll size={136} />
              </DiagUpper>
              <Bar />
              <StatTabs>
                <StatTab $active $w={61}>Resumen</StatTab>
                <StatTab $w={53}>Eventos</StatTab>
                <StatTab $w={99}>Uso de memoria</StatTab>
                <StatTab $w={73}>Uso de CPU</StatTab>
              </StatTabs>
              <DiagLower>
                <SummaryList>
                  <SummaryRow $h={25}>Eventos</SummaryRow>
                  <SummaryRow $h={28} $item $pt={0}><RowIcon><EventsIcon /></RowIcon>Mostrar eventos (0 de 0)</SummaryRow>
                  <SummaryRow $h={23}>Uso de memoria</SummaryRow>
                  <SummaryRow $h={29} $item><RowIcon><Camera size={13} /></RowIcon>Tomar instantánea</SummaryRow>
                  <SummaryRow $h={23} $last $pt={0}>Uso de CPU</SummaryRow>
                </SummaryList>
                <DarkScroll size={76} />
              </DiagLower>
            </DiagPanel>
          </TopRow>

          <BottomRow>
            <ToolPane $w={660}>
              <PaneBox>
                <PanelTitle $h={24} $pb={2} $pl={5}>Automático<PanelControls /></PanelTitle>
                <PaneTools>
                  <SearchBox $w={226}>
                    Buscar (Ctrl+E)
                    <SearchIcons><LensIcon /><Caret /></SearchIcons>
                  </SearchBox>
                  <Slot $w={20}><ArrowLeft size={22} strokeWidth={0.8} /></Slot>
                  <Slot $w={26}><ArrowRight size={22} strokeWidth={0.8} /></Slot>
                  <Gap $w={1} />
                  <DimText>Profundidad de búsqueda:</DimText>
                  <Gap $w={6} />
                  <Combo $w={40} $h={20}><span /><Caret $color="#5f5f5f" /></Combo>
                </PaneTools>
                <Pane>
                  <GridArea>
                    <GridHead $cols="9px 210px 315px 1fr">
                      <GridCol $first />
                      <GridCol>Nombre</GridCol>
                      <GridCol>Valor</GridCol>
                      <GridCol>Tipo</GridCol>
                    </GridHead>
                  </GridArea>
                  <DarkScroll size={88} />
                </Pane>
              </PaneBox>
              <PaneTabs>
                <PaneTab $active $ml={1} $w={75}>Automático</PaneTab>
                <PaneTab $ml={6} $w={97}>Variables locales</PaneTab>
                <PaneTab>Inspección 1</PaneTab>
              </PaneTabs>
            </ToolPane>

            <ToolPane $w={664}>
              <PaneBox>
                <PanelTitle $h={24} $pb={2} $pl={5}><span /><PanelControls /></PanelTitle>
                <PaneTools>
                  <SearchBox $w={224} $pl={4}>
                    Buscar (Ctrl+E)
                    <SearchIcons><LensIcon /><Caret /></SearchIcons>
                  </SearchBox>
                  <Slot $w={20}><ArrowLeft size={22} strokeWidth={0.8} /></Slot>
                  <Slot $w={26}><ArrowRight size={22} strokeWidth={0.8} /></Slot>
                  <ToolSep $m={0} />
                  <Gap $w={7} />
                  <Slot $w={20}><ThreadsIcon /></Slot>
                  <Gap $w={1} />
                  <DimText>Ver todos los subprocesos</DimText>
                  <ToolSep $m={11} $mr={8} />
                  <CopyIcon size={15} />
                  <ToolText $ml={5}>Mostrar código externo</ToolText>
                </PaneTools>
                <Pane>
                  <GridArea>
                    <GridHead $cols="16px 600px 1fr">
                      <GridCol $first />
                      <GridCol>Nombre</GridCol>
                      <GridCol>Lenguaje</GridCol>
                    </GridHead>
                  </GridArea>
                  <DarkScroll size={88} />
                </Pane>
              </PaneBox>
              <PaneTabs>
                <PaneTab $active $w={97}>Pila de llamadas</PaneTab>
                <PaneTab $ml={6} $w={133}>Puntos de interrupción</PaneTab>
                <PaneTab $w={165}>Configuración de excepcio...</PaneTab>
                <PaneTab $w={115}>Ventana Comandos</PaneTab>
                <PaneTab $w={111}>Ventana Inmediato</PaneTab>
                <PaneTab>Salida</PaneTab>
              </PaneTabs>
            </ToolPane>
          </BottomRow>
        </Docks>

        <SideTabs>
          <SideTab $h={131}>Explorador de soluciones</SideTab>
          <SideTab $h={84}>Cambios de GIT</SideTab>
        </SideTabs>
      </WorkArea>

      <StatusBar>
        <StatusCheck />
        <ToolText $color="#f2f2f2" $ml={8}>Listo</ToolText>
        <Spring />
        <StatusItem $mr={4}><ArrowUp size={18} strokeWidth={1} /></StatusItem>
        <StatusItem $mr={23}>Agregar al control de código fuente<Gap $w={6} /><Caret $up $color="#f2f2f2" /></StatusItem>
        <StatusItem $mr={6}><RepoIcon /></StatusItem>
        <StatusItem $mr={21}>Seleccionar repositorio<Gap $w={6} /><Caret $up $color="#f2f2f2" /></StatusItem>
        <BellWrap>
          <Bell size={15} strokeWidth={1} />
          <BellBadge>1</BellBadge>
        </BellWrap>
      </StatusBar>

      <TaskBar>
        <StartBtn><WindowsLogo /></StartBtn>
        <TaskSearch>
          <MirrorIcon><Search size={19} strokeWidth={1.2} /></MirrorIcon>
          Buscar
        </TaskSearch>
        <TaskBtn><Cortana /></TaskBtn>
        <TaskBtn><TaskView /></TaskBtn>
        <TaskBtn><EdgeIcon /></TaskBtn>
        <TaskBtn><ExplorerIcon /></TaskBtn>
        <TaskBtn><MailIcon /></TaskBtn>
        <TaskBtn><StoreIcon /></TaskBtn>
        <TaskBtn $open><TeamsIcon /></TaskBtn>
        <TaskBtn $open><ChromeIcon /></TaskBtn>
        <TaskBtn $open><VsMark size={24} fill="#8f6fd8" /></TaskBtn>
        <TaskBtn $open $active><AppGlyph size={19} /></TaskBtn>
        <Tray>
          <TraySlot $w={30}><HelpIcon /></TraySlot>
          <TraySlot $w={24}><ChevronUp size={16} strokeWidth={1.4} /></TraySlot>
          <TraySlot $w={24}><CloudFail /></TraySlot>
          <TraySlot $w={24}><BatteryIcon /></TraySlot>
          <TraySlot $w={24}><WifiIcon /></TraySlot>
          <TraySlot $w={20}><SoundIcon /></TraySlot>
          <Clock>
            <span>02:03 p. m.</span>
            <span>02/11/2023</span>
          </Clock>
          <NotifyBtn>
            <NotifyIcon />
            <NotifyBadge>7</NotifyBadge>
          </NotifyBtn>
        </Tray>
      </TaskBar>

      <FormWindow>
        <FormTitle>
          <AppGlyph size={13} />
          <FormTitleText>Generador</FormTitleText>
          <FormCtl><MinGlyph /></FormCtl>
          <FormCtl><MaxGlyph /></FormCtl>
          <FormCtl><CrossGlyph size={11} color="#111" width={1} /></FormCtl>
        </FormTitle>
        <Heading>Genera los numeros del 1 al 20 con While</Heading>
        <FormRow>
          <PrintButton>Imprime en pantalla</PrintButton>
          <NumberList>
            <NumberItems>
              {NUMBERS.map((n) => (
                <div key={n}>{n}</div>
              ))}
            </NumberItems>
            <LightScroll width={17} top={59} size={72} color="#c8c8c8" />
          </NumberList>
        </FormRow>
      </FormWindow>
    </Page>
  );
}
